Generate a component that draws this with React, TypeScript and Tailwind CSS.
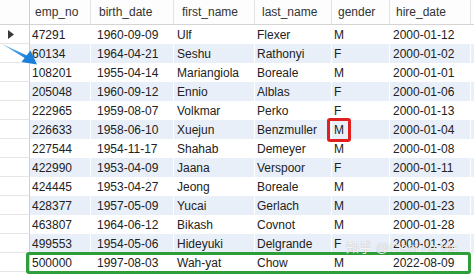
import React from "react";

const rows = [
  ["47291", "1960-09-09", "Ulf", "Flexer", "M", "2000-01-12"],
  ["60134", "1964-04-21", "Seshu", "Rathonyi", "F", "2000-01-02"],
  ["108201", "1955-04-14", "Mariangiola", "Boreale", "M", "2000-01-01"],
  ["205048", "1960-09-12", "Ennio", "Alblas", "F", "2000-01-06"],
  ["222965", "1959-08-07", "Volkmar", "Perko", "F", "2000-01-13"],
  ["226633", "1958-06-10", "Xuejun", "Benzmuller", "M", "2000-01-04"],
  ["227544", "1954-11-17", "Shahab", "Demeyer", "M", "2000-01-08"],
  ["422990", "1953-04-09", "Jaana", "Verspoor", "F", "2000-01-11"],
  ["424445", "1953-04-27", "Jeong", "Boreale", "M", "2000-01-03"],
  ["428377", "1957-05-09", "Yucai", "Gerlach", "M", "2000-01-23"],
  ["463807", "1964-06-12", "Bikash", "Covnot", "M", "2000-01-28"],
  ["499553", "1954-05-06", "Hideyuki", "Delgrande", "F", "2000-01-22"],
  ["500000", "1997-08-03", "Wah-yat", "Chow", "M", "2022-08-09"],
];

const headers = ["emp_no", "birth_date", "first_name", "last_name", "gender", "hire_date"];
const widths = ["w-[60px]", "w-[83px]", "w-[81px]", "w-[77px]", "w-[58px]", "w-[81px]"];
const dataPl = ["pl-[2px]", "pl-[6px]", "pl-[3px]", "pl-[2px]", "pl-[2px]", "pl-[3px]"];
const headPl = ["pl-[5px]", "pl-[8px]", "pl-[8px]", "pl-[7px]", "pl-[6px]", "pl-[6px]"];

export default function App() {
  return (
    <div
      className="relative w-[474px] h-[276px] overflow-hidden bg-white text-[12px] text-[#222]"
      style={{ fontFamily: '"Liberation Sans", Arial, sans-serif' }}
    >
      {/* header */}
      <div className="flex h-[25px] border-b border-[#d4d4d4] bg-[#fdfdfd]">
        <div className="w-[30px] shrink-0 border-r border-[#cfcfcf]" />
        {headers.map((h, i) => (
          <div
            key={h}
            className={`${widths[i]} shrink-0 ${i > 0 ? "border-l border-[#e2e2e2]" : ""} ${headPl[i]} flex items-center text-[#333]`}
          >
            {h}
          </div>
        ))}
        <div className="flex-1 border-l border-[#e2e2e2]" />
      </div>
      {/* rows */}
      {rows.map((r, ri) => {
        const stripe = ri % 2 === 1;
        return (
          <div key={r[0]} className="flex h-[19px]">
            <div className="w-[30px] shrink-0 border-r border-b border-r-[#cfcfcf] border-b-[#e6e6e6] flex items-center pl-[8px]">
              {ri === 0 && (
                <svg width="6" height="9" viewBox="0 0 6 9">
                  <path d="M0 0 L6 4.5 L0 9 Z" fill="#3a3a3a" />
                </svg>
              )}
            </div>
            {r.map((c, ci) => (
              <div
                key={ci}
                className={`${widths[ci]} shrink-0 ${ci > 0 ? "border-l border-white" : ""} ${dataPl[ci]} flex items-center ${stripe ? "bg-[#e9eff8]" : "bg-white"}`}
              >
                {c}
              </div>
            ))}
            <div className={`flex-1 border-l border-white ${stripe ? "bg-[#e9eff8]" : "bg-white"}`} />
          </div>
        );
      })}

      {/* blue arrow */}
      <svg className="absolute left-0 top-0" width="60" height="80" viewBox="0 0 60 80">
        <defs>
          <linearGradient id="ag" x1="0" y1="0" x2="1" y2="1">
            <stop offset="0" stopColor="#7cc0f2" />
            <stop offset="1" stopColor="#1a7fd8" />
          </linearGradient>
        </defs>
        <path d="M2 44 L27 55.5 L25.5 58.5 Z" fill="url(#ag)" />
        <path d="M37 64.5 L21.5 62 L30.5 50.5 Z" fill="#1a7fd8" />
      </svg>

      {/* red box */}
      <div className="absolute left-[327px] top-[118px] w-[24px] h-[24px] border-[3px] border-[#e0201e] rounded-[3px]" />

      {/* green box */}
      <div className="absolute left-[26px] top-[252px] w-[445px] h-[22px] border-[3px] border-[#2e9e3a] rounded-[3px]" />

      {/* watermark */}
      <div
        className="absolute left-[346px] top-[238px] text-[13px] text-white/90 whitespace-nowrap"
        style={{
          fontFamily: '"Liberation Sans", "Noto Sans CJK SC", sans-serif',
          textShadow: "0 0 1px rgba(0,0,0,0.35)",
        }}
      >
        知乎 @C'est La Vie
      </div>
    </div>
  );
}
